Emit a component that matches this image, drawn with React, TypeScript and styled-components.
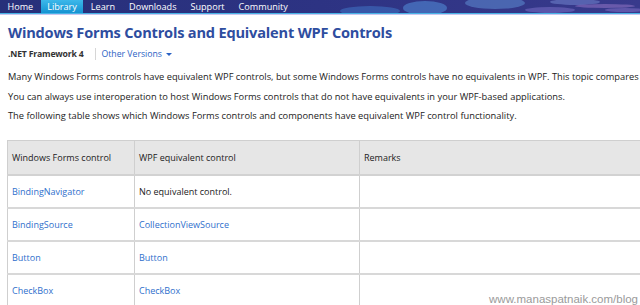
import React from 'react';
import styled, { createGlobalStyle } from 'styled-components';

const GlobalStyle = createGlobalStyle`
  html, body {
    margin: 0;
    padding: 0;
    background: #fff;
    overflow: hidden;
  }
  body {
    font-family: 'Open Sans', 'Noto Sans', sans-serif;
    width: 640px;
    height: 305px;
  }
`;

const Page = styled.div`
  position: relative;
  width: 640px;
  height: 305px;
  overflow: hidden;
`;

const NavBar = styled.nav`
  position: relative;
  display: flex;
  gap: 1px;
  height: 13px;
  padding-left: 1px;
  background: linear-gradient(90deg, #27307a 0%, #2d3383 50%, #383a8c 100%);
  border-bottom: 1px solid #47b4e6;
  box-shadow: 0 1px 0 #c9c6ef;
  overflow: hidden;
`;

const Bubbles = styled.svg`
  position: absolute;
  right: 0;
  top: 0;
`;

const NavItem = styled.a<{ $active?: boolean }>`
  position: relative;
  display: block;
  padding: 0 6.5px;
  font-size: 9.1px;
  line-height: 13px;
  color: #fff;
  text-decoration: none;
  background: ${(p) =>
    p.$active ? 'linear-gradient(180deg, #3cb8ea 0%, #1593d2 100%)' : 'transparent'};
`;

const Content = styled.main`
  padding: 0 0 0 8px;
`;

const Title = styled.h1`
  margin: 8px 0 0;
  font-size: 14.6px;
  line-height: 20px;
  font-weight: 700;
  color: #2e4d9f;
  letter-spacing: -0.2px;
  white-space: nowrap;
`;

const MetaRow = styled.div`
  display: flex;
  align-items: center;
  margin-top: 3px;
  height: 18px;
  font-size: 8.7px;
`;

const Framework = styled.span`
  font-weight: 700;
  color: #333;
  letter-spacing: -0.2px;
  padding-right: 11px;
  border-right: 1px solid #d6d6d6;
  line-height: 12px;
`;

const Versions = styled.a`
  color: #2a62c4;
  padding-left: 6px;
  text-decoration: none;
`;

const Caret = styled.span`
  display: inline-block;
  margin-left: 4px;
  vertical-align: middle;
  border-left: 3px solid transparent;
  border-right: 3px solid transparent;
  border-top: 3px solid #2a62c4;
`;

const Intro = styled.div`
  margin-top: 4px;
`;

const Para = styled.p`
  margin: 0;
  font-size: 9.3px;
  line-height: 19.5px;
  color: #222;
  white-space: nowrap;
`;

const Table = styled.table`
  margin: 14px 0 0 -1px;
  border-collapse: collapse;
  width: 720px;
  table-layout: fixed;
  font-size: 9px;
`;

const HeadCell = styled.th<{ $w: number }>`
  box-sizing: border-box;
  width: ${(p) => p.$w}px;
  height: 35px;
  padding: 0 4px;
  text-align: left;
  font-weight: 400;
  color: #222;
  background: #e6e6e6;
  border: 1px solid #cfcfcf;
  border-bottom: 2px solid #d2d2d2;
`;

const Cell = styled.td<{ $link?: boolean }>`
  box-sizing: border-box;
  height: 33px;
  padding: 0 4px;
  color: ${(p) => (p.$link ? '#2f6fcc' : '#222')};
  border: 1px solid #cfcfcf;
  border-bottom: 2px solid #d8d8d8;
  white-space: nowrap;
`;

const Watermark = styled.div`
  position: absolute;
  right: 2px;
  bottom: 0px;
  font-family: 'Liberation Sans', Arial, sans-serif;
  font-size: 11.5px;
  color: #9a9a9a;
  background: rgba(255, 255, 255, 0.7);
`;

const rows: [string, string, boolean][] = [
  ['BindingNavigator', 'No equivalent control.', false],
  ['BindingSource', 'CollectionViewSource', true],
  ['Button', 'Button', true],
  ['CheckBox', 'CheckBox', true],
];

const navItems = ['Home', 'Library', 'Learn', 'Downloads', 'Support', 'Community'];

export default function App() {
  return (
    <Page>
      <GlobalStyle />
      <NavBar>
        <Bubbles width="310" height="13" viewBox="0 0 310 13">
          <ellipse cx="40" cy="11" rx="30" ry="5" fill="#3f6fc0" opacity="0.6" />
          <ellipse cx="95" cy="8" rx="22" ry="7" fill="#4c7cc8" opacity="0.7" />
          <ellipse cx="165" cy="3" rx="30" ry="6" fill="#5a86cc" opacity="0.6" />
          <ellipse cx="220" cy="10" rx="25" ry="3" fill="#6a62b8" opacity="0.7" />
          <ellipse cx="245" cy="2" rx="25" ry="3" fill="#6d7fc8" opacity="0.6" />
          <ellipse cx="275" cy="6" rx="30" ry="2" fill="#8a70c0" opacity="0.6" />
          <ellipse cx="295" cy="10" rx="20" ry="2" fill="#7a6ac0" opacity="0.6" />
        </Bubbles>
        {navItems.map((n) => (
          <NavItem key={n} $active={n === 'Library'}>
            {n}
          </NavItem>
        ))}
      </NavBar>
      <Content>
        <Title>Windows Forms Controls and Equivalent WPF Controls</Title>
        <MetaRow>
          <Framework>.NET Framework 4</Framework>
          <Versions>
            Other Versions<Caret />
          </Versions>
        </MetaRow>
        <Intro>
          <Para>
            Many Windows Forms controls have equivalent WPF controls, but some Windows Forms
            controls have no equivalents in WPF. This topic compares control types provided by
            both technologies.
          </Para>
          <Para>
            You can always use interoperation to host Windows Forms controls that do not have
            equivalents in your WPF-based applications.
          </Para>
          <Para>
            The following table shows which Windows Forms controls and components have equivalent
            WPF control functionality.
          </Para>
        </Intro>
        <Table>
          <thead>
            <tr>
              <HeadCell $w={127}>Windows Forms control</HeadCell>
              <HeadCell $w={225}>WPF equivalent control</HeadCell>
              <HeadCell $w={368}>Remarks</HeadCell>
            </tr>
          </thead>
          <tbody>
            {rows.map(([a, b, link]) => (
              <tr key={a}>
                <Cell $link>{a}</Cell>
                <Cell $link={link}>{b}</Cell>
                <Cell />
              </tr>
            ))}
          </tbody>
        </Table>
      </Content>
      <Watermark>www.manaspatnaik.com/blog</Watermark>
    </Page>
  );
}
